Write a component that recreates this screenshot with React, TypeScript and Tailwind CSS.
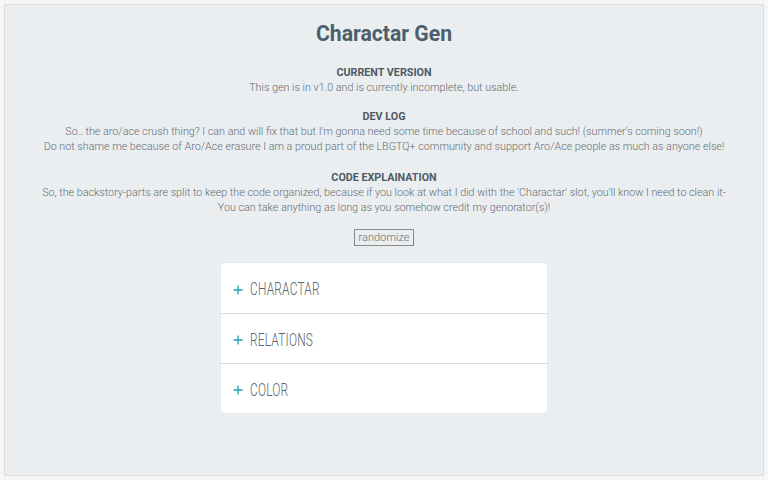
import { useState } from 'react'

const sections = ['CHARACTAR', 'RELATIONS', 'COLOR']

function Plus() {
  return (
    <svg width="10" height="10" viewBox="0 0 10 10" className="shrink-0">
      <path d="M5 0.5V9.5M0.5 5H9.5" stroke="#1aa3b3" strokeWidth="1.3" fill="none" />
    </svg>
  )
}

export default function App() {
  const [open, setOpen] = useState<string | null>(null)

  return (
    <div className="min-h-screen bg-[#f6f6f6] p-1" style={{ fontFamily: 'Roboto, "Liberation Sans", sans-serif' }}>
      <div className="flex h-[472px] flex-col items-center border border-[#dedede] bg-[#eaeef1] pt-[14px] text-center">
        <h1 className="text-[21.2px] font-bold leading-[30px] text-[#4c5f6b]">Charactar Gen</h1>

        <div className="mt-[16px] text-[10.75px] leading-[15px] font-light text-[#666d72]">
          <p className="font-bold text-[#4e5a62]">CURRENT VERSION</p>
          <p>This gen is in v1.0 and is currently incomplete, but usable.</p>
        </div>

        <div className="mt-[14px] text-[10.75px] leading-[15px] font-light text-[#666d72]">
          <p className="font-bold text-[#4e5a62]">DEV LOG</p>
          <p>
            So.. the aro/ace crush thing? I can and will fix that but I'm gonna need some time because of school and
            such! (summer's coming soon!)
          </p>
          <p>
            Do not shame me because of Aro/Ace erasure I am a proud part of the LBGTQ+ community and support Aro/Ace
            people as much as anyone else!
          </p>
        </div>

        <div className="mt-[16px] text-[10.75px] leading-[15px] font-light text-[#666d72]">
          <p className="font-bold text-[#4e5a62]">CODE EXPLAINATION</p>
          <p>
            So, the backstory-parts are split to keep the code organized, because if you look at what I did with the
            'Charactar' slot, you'll know I need to clean it-
          </p>
          <p>You can take anything as long as you somehow credit my genorator(s)!</p>
        </div>

        <button className="mt-[14px] h-[17px] border border-[#8a8a8a] bg-[#eaeef1] px-[4px] text-[11px] leading-[15px] font-light text-[#666d72]">
          randomize
        </button>

        <div className="mt-[17px] w-[326px] overflow-hidden rounded-[3px] bg-white shadow-[0_0_1px_rgba(0,0,0,0.15)]">
          {sections.map((s, i) => (
            <button
              key={s}
              onClick={() => setOpen(open === s ? null : s)}
              className={`flex h-[50px] w-full items-center gap-[7px] px-[12px] pt-[3px] text-left ${
                i > 0 ? 'border-t border-[#d9dde0]' : ''
              }`}
            >
              <Plus />
              <span className="inline-block origin-left scale-x-[0.68] text-[17.5px] font-light tracking-[0.3px] text-[#5a646c]">
                {s}
              </span>
            </button>
          ))}
        </div>
      </div>
    </div>
  )
}
